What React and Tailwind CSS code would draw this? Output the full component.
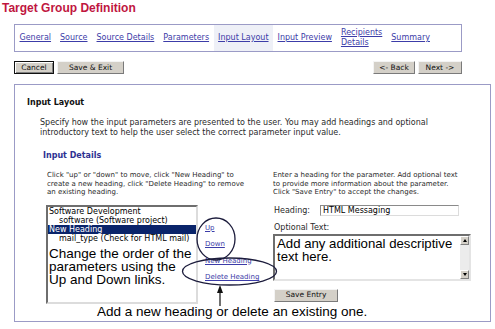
import React from "react";

const tabs = [
  ["General"],
  ["Source"],
  ["Source Details"],
  ["Parameters"],
  ["Input Layout", true],
  ["Input Preview"],
  ["Recipients|Details"],
  ["Summary"],
];

function Btn({ children, w, focus }) {
  return (
    <div
      className={
        "h-[13px] flex items-center justify-center text-[7.5px] leading-none text-[#111] bg-[#d4d0c8] " +
        (focus
          ? "border border-[#111] shadow-[inset_1px_1px_0_#fff,inset_-1px_-1px_0_#808080]"
          : "border border-t-[#f4f4f4] border-l-[#f4f4f4] border-r-[#7a7a7a] border-b-[#7a7a7a]")
      }
      style={{ width: w }}
    >
      {children}
    </div>
  );
}

export default function App() {
  return (
    <div className="w-[495px] h-[329px] bg-white relative overflow-hidden font-['DejaVu_Sans',Verdana,sans-serif] text-[#2a2a2a]">
      {/* Title */}
      <div className="h-[24px] pl-[2px] pt-[1px] text-[12px] leading-[15px] font-bold text-[#c0163f] font-['Liberation_Sans',Arial,sans-serif]">
        Target Group Definition
      </div>

      {/* Tabs */}
      <div className="ml-[14px] w-[448px] h-[28px] border border-[#9b9bc6] flex items-stretch text-[8px] text-[#3c3ca8]">
        {tabs.map(([t, active]) => (
          <div
            key={t}
            className={
              "flex items-center px-[4.5px] " + (active ? "bg-[#eef0f7]" : "")
            }
          >
            <span className="underline underline-offset-[1px] leading-[10px] whitespace-nowrap">
              {t.includes("|") ? (
                <>
                  {t.split("|")[0]}
                  <br />
                  {t.split("|")[1]}
                </>
              ) : (
                t
              )}
            </span>
          </div>
        ))}
      </div>

      {/* Buttons */}
      <div className="ml-[14px] mt-[9px] w-[448px] flex justify-between">
        <div className="flex gap-[3px]">
          <Btn w={40} focus>
            Cancel
          </Btn>
          <Btn w={67}>Save &amp; Exit</Btn>
        </div>
        <div className="flex gap-[3px]">
          <Btn w={42}>&lt;- Back</Btn>
          <Btn w={44}>Next -&gt;</Btn>
        </div>
      </div>

      {/* Main panel */}
      <div className="ml-[14px] mt-[10px] w-[477px] h-[238px] border border-[#9b9bc6]">
        <div className="ml-[12px] mt-[13px] text-[8px] leading-[10px] font-bold text-[#111]">
          Input Layout
        </div>
        <div className="ml-[25px] mt-[10px] w-[400px] text-[8px] leading-[10px]">
          Specify how the input parameters are presented to the user. You may
          add headings and optional introductory text to help the user select
          the correct parameter input value.
        </div>
        <div className="ml-[28px] mt-[13px] text-[8px] leading-[10px] font-bold text-[#2e3192]">
          Input Details
        </div>

        <div className="ml-[32px] mt-[10px] flex">
          {/* Left column */}
          <div className="w-[226px] shrink-0">
            <div className="w-[206px] text-[7px] leading-[8.5px]">
              Click "up" or "down" to move, click "New Heading" to create a new
              heading, click "Delete Heading" to remove an existing heading.
            </div>
            <div className="mt-[8px] ml-[-1px] flex">
              <div className="w-[152px] h-[99px] border-2 border-t-[#6e6e6e] border-l-[#6e6e6e] border-r-[#dcdcdc] border-b-[#dcdcdc] bg-white text-black overflow-hidden">
                <div className="text-[8px] leading-[9px] whitespace-nowrap">
                  <div className="h-[9px] pl-[1px]">Software Development</div>
                  <div className="h-[9px] pl-[11px]">software (Software project)</div>
                  <div className="h-[9px] pl-[1px] bg-[#0a246a] text-white">New Heading</div>
                  <div className="h-[9px] pl-[11px]">mail_type (Check for HTML mail)</div>
                </div>
                <div className="mt-[4px] pl-[1px] font-['Liberation_Sans',Arial,sans-serif] text-[13.5px] leading-[13px]">
                  Change the order of the parameters using the Up and Down
                  links.
                </div>
              </div>
              <div className="ml-[7px] pt-[19px] flex flex-col gap-[7.5px] text-[7px] leading-[9px] text-[#3c3ca8] whitespace-nowrap">
                <span className="underline">Up</span>
                <span className="underline">Down</span>
                <span className="underline">New Heading</span>
                <span className="underline">Delete Heading</span>
              </div>
            </div>
          </div>

          {/* Right column */}
          <div className="w-[200px]">
            <div className="w-[189px] text-[7px] leading-[8.5px]">
              Enter a heading for the parameter. Add optional text to provide
              more information about the parameter. Click "Save Entry" to accept
              the changes.
            </div>
            <div className="mt-[8px] h-[12px] flex items-center text-[8px]">
              <span className="ml-[1px] w-[46px]">Heading:</span>
              <div className="w-[139px] h-[11px] border border-[#8a8a8a] border-r-[#dcdcdc] border-b-[#dcdcdc] flex items-center pl-[2px] text-[8px] text-black leading-none">
                HTML Messaging
              </div>
            </div>
            <div className="mt-[6px] ml-[1px] text-[8px] leading-[9px]">
              Optional Text:
            </div>
            <div className="mt-[2px] w-[198px] h-[47px] border-2 border-t-[#6e6e6e] border-l-[#6e6e6e] border-r-[#e4e4e4] border-b-[#e4e4e4] flex bg-white">
              <div className="flex-1 pl-[2px] pt-[1px] font-['Liberation_Sans',Arial,sans-serif] text-[13.2px] leading-[13px] text-black">
                Add any additional descriptive text here.
              </div>
              <div className="w-[9px] flex flex-col bg-[#ececec]">
                <div className="h-[9px] bg-[#d4d0c8] border border-t-white border-l-white border-r-[#808080] border-b-[#808080] flex items-center justify-center">
                  <div className="w-0 h-0 border-l-[2.5px] border-r-[2.5px] border-b-[3px] border-l-transparent border-r-transparent border-b-black" />
                </div>
                <div className="flex-1" />
                <div className="h-[9px] bg-[#d4d0c8] border border-t-white border-l-white border-r-[#808080] border-b-[#808080] flex items-center justify-center">
                  <div className="w-0 h-0 border-l-[2.5px] border-r-[2.5px] border-t-[3px] border-l-transparent border-r-transparent border-t-black" />
                </div>
              </div>
            </div>
            <div className="mt-[8px] ml-[1px]">
              <Btn w={64}>Save Entry</Btn>
            </div>
          </div>
        </div>

        <div className="ml-[82px] font-['Liberation_Sans',Arial,sans-serif] text-[13.5px] leading-[15px] text-black whitespace-nowrap">
          Add a new heading or delete an existing one.
        </div>
      </div>

      {/* Annotation overlay */}
      <svg
        className="absolute left-0 top-0 pointer-events-none"
        width="495"
        height="329"
        viewBox="0 0 495 329"
      >
        <ellipse cx="216" cy="239" rx="19" ry="21" fill="none" stroke="#1c1c3c" strokeWidth="1.3" />
        <ellipse cx="229.5" cy="271.5" rx="47" ry="13.5" fill="none" stroke="#1c1c3c" strokeWidth="1.3" />
        <line x1="220" y1="306" x2="220" y2="290" stroke="#111" strokeWidth="1.2" />
        <polygon points="220,285 217,293 223,293" fill="#111" />
      </svg>
    </div>
  );
}
